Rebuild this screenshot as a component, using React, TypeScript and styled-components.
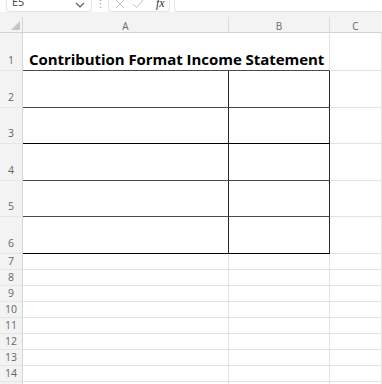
import React from "react";
import styled, { createGlobalStyle } from "styled-components";

const GlobalStyle = createGlobalStyle`
  html, body {
    margin: 0;
    padding: 0;
    background: #ffffff;
    overflow: hidden;
  }
  * {
    box-sizing: border-box;
  }
`;

const Page = styled.div`
  width: 382px;
  height: 384px;
  overflow: hidden;
  background: #ffffff;
  font-family: "Open Sans", "Liberation Sans", sans-serif;
`;

const FormulaBar = styled.div`
  height: 12px;
  display: flex;
  align-items: flex-end;
  padding-left: 6px;
  overflow: hidden;
  background: #ffffff;
`;

const NameBox = styled.div`
  width: 86px;
  height: 24px;
  flex: none;
  display: flex;
  align-items: flex-end;
  justify-content: space-between;
  padding: 0 6px 3px 5px;
  border: 1px solid #e3e3e3;
  border-radius: 4px;
  box-shadow: 0 1px 1px rgba(0, 0, 0, 0.06);
  font-size: 11px;
  line-height: 12px;
  color: #444444;
`;

const Dots = styled.div`
  width: 16px;
  flex: none;
  display: flex;
  justify-content: center;
  padding-bottom: 2px;
  font-size: 11px;
  line-height: 12px;
  color: #9a9a9a;
`;

const FxBox = styled.div`
  width: 62px;
  height: 24px;
  flex: none;
  display: flex;
  align-items: flex-end;
  gap: 7px;
  padding: 0 0 2px 6px;
  border: 1px solid #e3e3e3;
  border-radius: 4px;
  box-shadow: 0 1px 1px rgba(0, 0, 0, 0.06);
`;

const Fx = styled.span`
  font-family: "Liberation Serif", serif;
  font-style: italic;
  font-size: 12px;
  line-height: 12px;
  color: #333333;
  margin-left: 5px;
`;

const InputBox = styled.div`
  flex: 1;
  height: 24px;
  margin-left: 4px;
  border: 1px solid #e3e3e3;
  border-right: none;
  border-radius: 4px 0 0 4px;
  box-shadow: 0 1px 1px rgba(0, 0, 0, 0.06);
`;

const Gap = styled.div`
  height: 5px;
  background: #f3f3f3;
`;

const Grid = styled.div`
  display: grid;
  grid-template-columns: 23px 206px 101px 52px;
  grid-template-rows: 16px 38px 37px 36px 37px 36px 37px repeat(9, 16px);
`;

const Corner = styled.div`
  background: #f3f3f3;
  border-right: 1px solid #d6d6d6;
  border-bottom: 1px solid #d2d2d2;
  position: relative;
  overflow: hidden;
`;

const CornerMark = styled.svg`
  position: absolute;
  right: 2px;
  bottom: 2px;
`;

const ColHead = styled.div<{ $last?: boolean }>`
  background: #f3f3f3;
  border-bottom: 1px solid #d2d2d2;
  border-right: 1px solid ${(p) => (p.$last ? "transparent" : "#dadada")};
  display: flex;
  align-items: center;
  justify-content: center;
  padding-top: 2px;
  font-size: 10px;
  line-height: 12px;
  color: #6a6a6a;
`;

const RowHead = styled.div<{ $tall?: boolean }>`
  background: #f3f3f3;
  border-right: 1px solid #d6d6d6;
  border-bottom: 1px solid #e6e6e6;
  display: flex;
  align-items: flex-end;
  justify-content: center;
  padding-bottom: ${(p) => (p.$tall ? "3px" : "1px")};
  font-size: 10.5px;
  line-height: 13px;
  color: #666666;
`;

const Cell = styled.div<{ $bottom?: string; $right?: string }>`
  background: #ffffff;
  border-bottom: 1px solid ${(p) => p.$bottom || "#e2e2e2"};
  border-right: 1px solid ${(p) => p.$right || "#e2e2e2"};
`;

const TitleCell = styled.div`
  grid-column: span 2;
  background: #ffffff;
  border-bottom: 1px solid #4a4a4a;
  border-right: 1px solid #e2e2e2;
  display: flex;
  align-items: flex-end;
  padding: 0 0 2px 6px;
  white-space: nowrap;
  font-family: "Open Sans", "Liberation Sans", sans-serif;
  font-weight: 700;
  font-size: 15px;
  line-height: 18px;
  letter-spacing: -0.05px;
  color: #000000;
`;

const lines = ["#4a4a4a", "#000000", "#4a4a4a", "#4a4a4a", "#000000"];
const tableRows = [2, 3, 4, 5, 6];
const emptyRows = [7, 8, 9, 10, 11, 12, 13, 14, 15];

const App = () => {
  return (
    <Page>
      <GlobalStyle />
      <FormulaBar>
        <NameBox>
          <span>E5</span>
          <svg width="10" height="6" viewBox="0 0 10 6">
            <path d="M1 1 L5 5 L9 1" fill="none" stroke="#555" strokeWidth="1.1" />
          </svg>
        </NameBox>
        <Dots>⋮</Dots>
        <FxBox>
          <svg width="10" height="10" viewBox="0 0 10 10">
            <path d="M1 1 L9 9 M9 1 L1 9" stroke="#c2c2c2" strokeWidth="1" />
          </svg>
          <svg width="12" height="10" viewBox="0 0 12 10">
            <path d="M1 5 L4.5 8.5 L11 1" fill="none" stroke="#c2c2c2" strokeWidth="1" />
          </svg>
          <Fx>fx</Fx>
        </FxBox>
        <InputBox />
      </FormulaBar>
      <Gap />
      <Grid>
        <Corner>
          <CornerMark width="9" height="9" viewBox="0 0 9 9">
            <path d="M9 0 L9 9 L0 9 Z" fill="#c6c6c6" />
          </CornerMark>
        </Corner>
        <ColHead>A</ColHead>
        <ColHead>B</ColHead>
        <ColHead $last>C</ColHead>

        <RowHead $tall>1</RowHead>
        <TitleCell>Contribution Format Income Statement</TitleCell>
        <Cell />

        {tableRows.map((n, i) => (
          <React.Fragment key={n}>
            <RowHead $tall>{n}</RowHead>
            <Cell $bottom={lines[i]} $right="#2a2a2a" />
            <Cell $bottom={lines[i]} $right="#2a2a2a" />
            <Cell />
          </React.Fragment>
        ))}

        {emptyRows.map((n) => (
          <React.Fragment key={n}>
            <RowHead>{n}</RowHead>
            <Cell />
            <Cell />
            <Cell />
          </React.Fragment>
        ))}
      </Grid>
    </Page>
  );
};

export default App;
